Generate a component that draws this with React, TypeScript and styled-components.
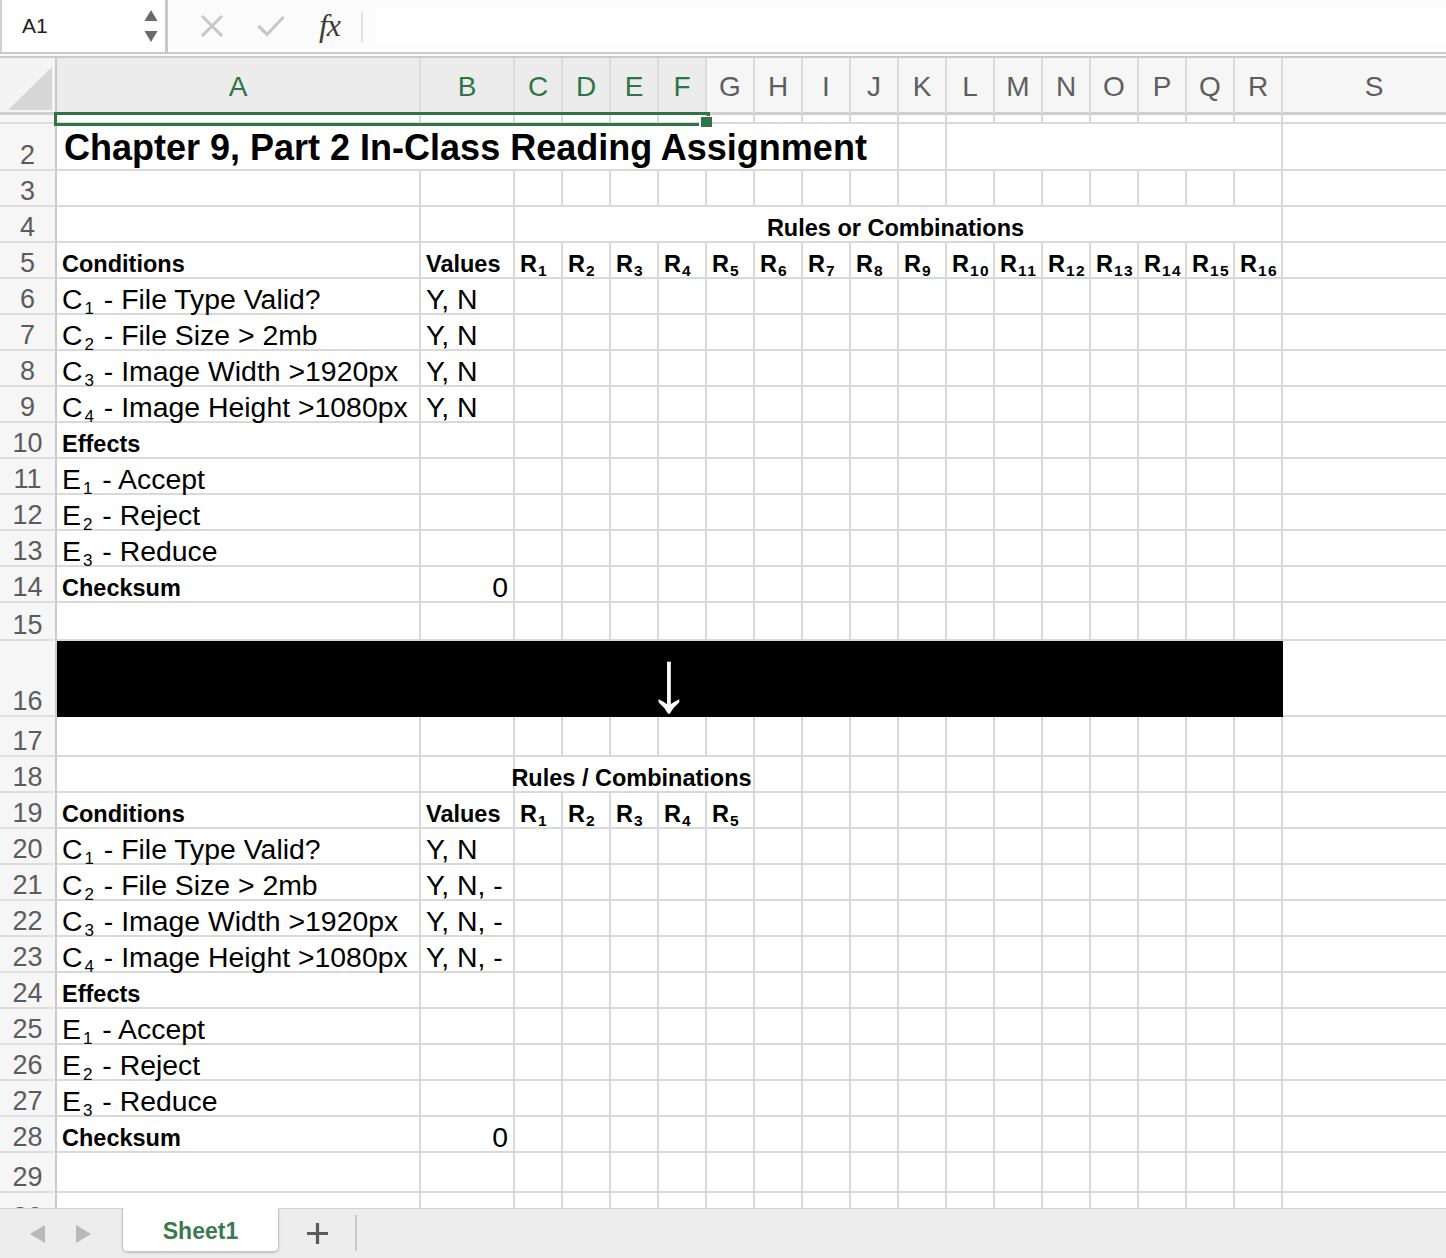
import React from "react";
import styled, { createGlobalStyle } from "styled-components";

const GlobalStyle = createGlobalStyle`
  html, body {
    margin: 0;
    padding: 0;
    background: #fff;
    overflow: hidden;
  }
  body {
    font-family: "Liberation Sans", Arial, sans-serif;
  }
`;

const COLS = "57px 364px 94px repeat(16, 48px) 184px";
const GRID = "#d9d9d9";
const GREEN = "#2f7446";

const Window = styled.div`
  width: 1446px;
  height: 1258px;
  display: flex;
  flex-direction: column;
  overflow: hidden;
`;

// ---------- formula bar ----------
const Toolbar = styled.div`
  height: 52px;
  flex-shrink: 0;
  display: flex;
  align-items: stretch;
  background: #fbfbfb;
  border-bottom: 6px double #cacaca;
`;

const NameBox = styled.div`
  width: 168px;
  box-sizing: border-box;
  display: flex;
  align-items: center;
  justify-content: space-between;
  padding: 0 7px 0 20px;
  background: #fff;
  border-right: 3px solid #c9c9c9;
  border-left: 2px solid #d2d2d2;
  font-size: 21px;
  color: #1e1e1e;
`;

const Actions = styled.div`
  display: flex;
  align-items: stretch;
  padding-left: 14px;
`;

const IconSlot = styled.span`
  width: 59px;
  display: flex;
  align-items: center;
  justify-content: center;
`;

const Fx = styled.span`
  font-family: "Liberation Serif", "Times New Roman", serif;
  font-style: italic;
  font-size: 32px;
  color: #3c3c3c;
  letter-spacing: -1px;
  margin-top: -2px;
`;

const BarDivider = styled.span`
  width: 2px;
  margin: 12px 0 10px 2px;
  background: #e1e1e1;
`;

const FormulaInput = styled.div`
  flex: 1;
  margin: 8px 0 7px 13px;
  background: #fff;
`;

// ---------- sheet ----------
const SheetArea = styled.div`
  flex: 1;
  position: relative;
  overflow: hidden;
  display: flex;
  flex-direction: column;
`;

const Row = styled.div<{ $h: number }>`
  display: grid;
  grid-template-columns: ${COLS};
  height: ${(p) => p.$h}px;
  flex-shrink: 0;
`;

const Corner = styled.div`
  background: #f4f4f4;
  border-right: 2px solid #c9c9c9;
  border-bottom: 3px solid #cfcfcf;
  display: flex;
  align-items: flex-end;
  justify-content: flex-end;
  padding: 0 3px 2px 0;
`;

const ColHead = styled.div<{ $sel: boolean }>`
  display: flex;
  align-items: center;
  justify-content: center;
  font-size: 28px;
  padding-top: 3px;
  background: ${(p) => (p.$sel ? "#ececec" : "#f6f6f6")};
  color: ${(p) => (p.$sel ? "#2e7548" : "#5e5e5e")};
  border-right: 2px solid #dcdcdc;
  border-bottom: 3px solid ${(p) => (p.$sel ? GREEN : "#cfcfcf")};
`;

const RowNum = styled.div`
  display: flex;
  align-items: flex-end;
  justify-content: center;
  line-height: 1;
  font-size: 27px;
  color: #5c5c5c;
  background: #f6f6f6;
  border-right: 2px solid #c9c9c9;
  border-bottom: 2px solid #dedede;
  overflow: hidden;
`;

type Kind = "text" | "label" | "title" | "num" | "center" | "band";

const Cell = styled.div<{ $span: number; $kind: Kind }>`
  grid-column: span ${(p) => p.$span};
  display: flex;
  align-items: flex-end;
  justify-content: ${(p) =>
    p.$kind === "num" ? "flex-end" : p.$kind === "center" || p.$kind === "band" ? "center" : "flex-start"};
  padding: 0 5px ${(p) => (p.$kind === "title" ? 3 : p.$kind === "text" || p.$kind === "num" || p.$kind === "band" ? 0 : 1)}px;
  padding-left: ${(p) => (p.$kind === "title" ? 7 : p.$kind === "center" ? 0 : 5)}px;
  line-height: 1;
  white-space: nowrap;
  color: ${(p) => (p.$kind === "band" ? "#fff" : "#000")};
  font-size: ${(p) => (p.$kind === "title" ? 36 : p.$kind === "text" || p.$kind === "num" ? 28.4 : 23.5)}px;
  font-weight: ${(p) => (p.$kind === "text" || p.$kind === "num" || p.$kind === "band" ? 400 : 700)};
  background: ${(p) => (p.$kind === "band" ? "#000" : "transparent")};
  border-right: 2px solid ${(p) => (p.$kind === "band" ? "#000" : GRID)};
  border-bottom: 2px solid ${(p) => (p.$kind === "band" ? "#000" : GRID)};
`;

const Content = styled.span`
  white-space: pre;
`;

const Sub = styled.span<{ $bold?: boolean }>`
  font-size: ${(p) => (p.$bold ? 0.66 : 0.6)}em;
  position: relative;
  top: 0.3em;
  margin: 0 ${(p) => (p.$bold ? 0 : 2)}px 0 ${(p) => (p.$bold ? 1 : 2)}px;
  letter-spacing: ${(p) => (p.$bold ? 1.5 : 0)}px;
`;

const Arrow = styled.span`
  font-size: 88px;
  line-height: 0.76;
  color: #fff;
`;

const Selection = styled.div`
  position: absolute;
  left: 54px;
  top: 54px;
  width: 656px;
  height: 14px;
  box-sizing: border-box;
  border: 3px solid ${GREEN};
  pointer-events: none;
`;

const Handle = styled.div`
  position: absolute;
  left: 701px;
  top: 59px;
  width: 11px;
  height: 10px;
  background: ${GREEN};
  box-shadow: -2px -1px 0 #fff;
`;

// ---------- sheet tabs ----------
const TabBar = styled.div`
  height: 50px;
  flex-shrink: 0;
  display: flex;
  align-items: flex-start;
  background: #ededed;
  border-top: 1px solid #d2d2d2;
  box-sizing: border-box;
`;

const NavArrows = styled.div`
  width: 122px;
  height: 100%;
  display: flex;
  align-items: center;
  gap: 31px;
  padding-left: 30px;
  box-sizing: border-box;
`;

const SheetTab = styled.div`
  width: 157px;
  height: 44px;
  margin-top: -1px;
  box-sizing: border-box;
  display: flex;
  align-items: center;
  justify-content: center;
  padding-top: 4px;
  background: #fff;
  border: 1px solid #c6c6c6;
  border-top: none;
  border-radius: 0 0 5px 5px;
  box-shadow: 0 1px 2px rgba(0, 0, 0, 0.18);
  font-size: 23px;
  font-weight: 700;
  color: #3a7a4e;
`;

const AddSheet = styled.div`
  width: 76px;
  height: 100%;
  display: flex;
  align-items: center;
  justify-content: center;
`;

const TabDivider = styled.div`
  width: 2px;
  height: 36px;
  margin-top: 6px;
  background: #c9c9c9;
`;

// ---------- data ----------
type CellSpec = { span?: number; kind?: Kind; text?: React.ReactNode };
type RowSpec = { n: number; h: number; cells: CellSpec[]; hideNum?: boolean };

const empty = (n: number): CellSpec[] => Array.from({ length: n }, () => ({}));
const sub = (letter: string, n: number, bold = false) => (
  <>
    {letter}
    <Sub $bold={bold}>{n}</Sub>
  </>
);
const rules = (count: number): CellSpec[] =>
  Array.from({ length: count }, (_, i) => ({ kind: "label" as Kind, text: sub("R", i + 1, true) }));

const conditions = ["File Type Valid?", "File Size > 2mb", "Image Width >1920px", "Image Height >1080px"];
const effects = ["Accept", "Reject", "Reduce"];

function tableRows(start: number, values: string[], ruleCount: number, title: string, titleSpan: number): RowSpec[] {
  const out: RowSpec[] = [];
  out.push({
    n: start,
    h: 36,
    cells: [{}, {}, { span: titleSpan, kind: "center", text: title }, ...empty(17 - titleSpan)],
  });
  out.push({
    n: start + 1,
    h: 36,
    cells: [
      { kind: "label", text: "Conditions" },
      { kind: "label", text: "Values" },
      ...rules(ruleCount),
      ...empty(17 - ruleCount),
    ],
  });
  conditions.forEach((c, i) =>
    out.push({
      n: start + 2 + i,
      h: 36,
      cells: [
        { kind: "text", text: <>{sub("C", i + 1)}{" - " + c}</> },
        { kind: "text", text: values[i] },
        ...empty(17),
      ],
    })
  );
  out.push({ n: start + 6, h: 36, cells: [{ kind: "label", text: "Effects" }, ...empty(18)] });
  effects.forEach((e, i) =>
    out.push({
      n: start + 7 + i,
      h: 36,
      cells: [{ kind: "text", text: <>{sub("E", i + 1)}{" - " + e}</> }, ...empty(18)],
    })
  );
  out.push({
    n: start + 10,
    h: 36,
    cells: [{ kind: "label", text: "Checksum" }, { kind: "num", text: "0" }, ...empty(17)],
  });
  return out;
}

const rows: RowSpec[] = [
  { n: 1, h: 9, cells: empty(19), hideNum: true },
  {
    n: 2,
    h: 47,
    cells: [
      { span: 10, kind: "title", text: "Chapter 9, Part 2 In-Class Reading Assignment" },
      {},
      { span: 7 },
      {},
    ],
  },
  { n: 3, h: 36, cells: empty(19) },
  ...tableRows(4, ["Y, N", "Y, N", "Y, N", "Y, N"], 16, "Rules or Combinations", 16),
  { n: 15, h: 38, cells: empty(19) },
  { n: 16, h: 76, cells: [{ span: 18, kind: "band", text: <Arrow>↓</Arrow> }, {}] },
  { n: 17, h: 40, cells: empty(19) },
  ...tableRows(18, ["Y, N", "Y, N, -", "Y, N, -", "Y, N, -"], 5, "Rules / Combinations", 5),
  { n: 29, h: 40, cells: empty(19) },
  { n: 30, h: 40, cells: empty(19) },
];

const letters = "ABCDEFGHIJKLMNOPQRS".split("");
const selected = new Set(["A", "B", "C", "D", "E", "F"]);

export default function App() {
  return (
    <>
      <GlobalStyle />
      <Window>
        <Toolbar>
          <NameBox>
            A1
            <svg width="14" height="34" viewBox="0 0 14 34">
              <polygon points="7,1 13.5,12 0.5,12" fill="#6a6a6a" />
              <polygon points="7,33 13.5,22 0.5,22" fill="#6a6a6a" />
            </svg>
          </NameBox>
          <Actions>
            <IconSlot>
              <svg width="24" height="22" viewBox="0 0 24 22">
                <path d="M2 1 L22 21 M22 1 L2 21" stroke="#c8c8c8" strokeWidth="3" />
              </svg>
            </IconSlot>
            <IconSlot>
              <svg width="28" height="22" viewBox="0 0 28 22">
                <path d="M1.5 11 L10 19.5 L26.5 2" stroke="#c8c8c8" strokeWidth="3.2" fill="none" />
              </svg>
            </IconSlot>
            <IconSlot>
              <Fx>fx</Fx>
            </IconSlot>
          </Actions>
          <BarDivider />
          <FormulaInput />
        </Toolbar>

        <SheetArea>
          <Row $h={57}>
            <Corner>
              <svg width="44" height="43" viewBox="0 0 44 43">
                <polygon points="0,43 44,0 44,43" fill="#d6d6d6" />
              </svg>
            </Corner>
            {letters.map((l) => (
              <ColHead key={l} $sel={selected.has(l)}>
                {l}
              </ColHead>
            ))}
          </Row>
          {rows.map((r) => (
            <Row key={r.n} $h={r.h}>
              <RowNum>{r.hideNum ? "" : r.n}</RowNum>
              {r.cells.map((c, i) => (
                <Cell key={i} $span={c.span ?? 1} $kind={c.kind ?? "text"}>
                  {c.text !== undefined && <Content>{c.text}</Content>}
                </Cell>
              ))}
            </Row>
          ))}
          <Selection />
          <Handle />
        </SheetArea>

        <TabBar>
          <NavArrows>
            <svg width="15" height="18" viewBox="0 0 15 18">
              <polygon points="0,9 15,0 15,18" fill="#b9b9b9" />
            </svg>
            <svg width="15" height="18" viewBox="0 0 15 18">
              <polygon points="15,9 0,0 0,18" fill="#b9b9b9" />
            </svg>
          </NavArrows>
          <SheetTab>Sheet1</SheetTab>
          <AddSheet>
            <svg width="21" height="21" viewBox="0 0 21 21">
              <path d="M10.5 0 V21 M0 10.5 H21" stroke="#5a5a5a" strokeWidth="3.2" />
            </svg>
          </AddSheet>
          <TabDivider />
        </TabBar>
      </Window>
    </>
  );
}
